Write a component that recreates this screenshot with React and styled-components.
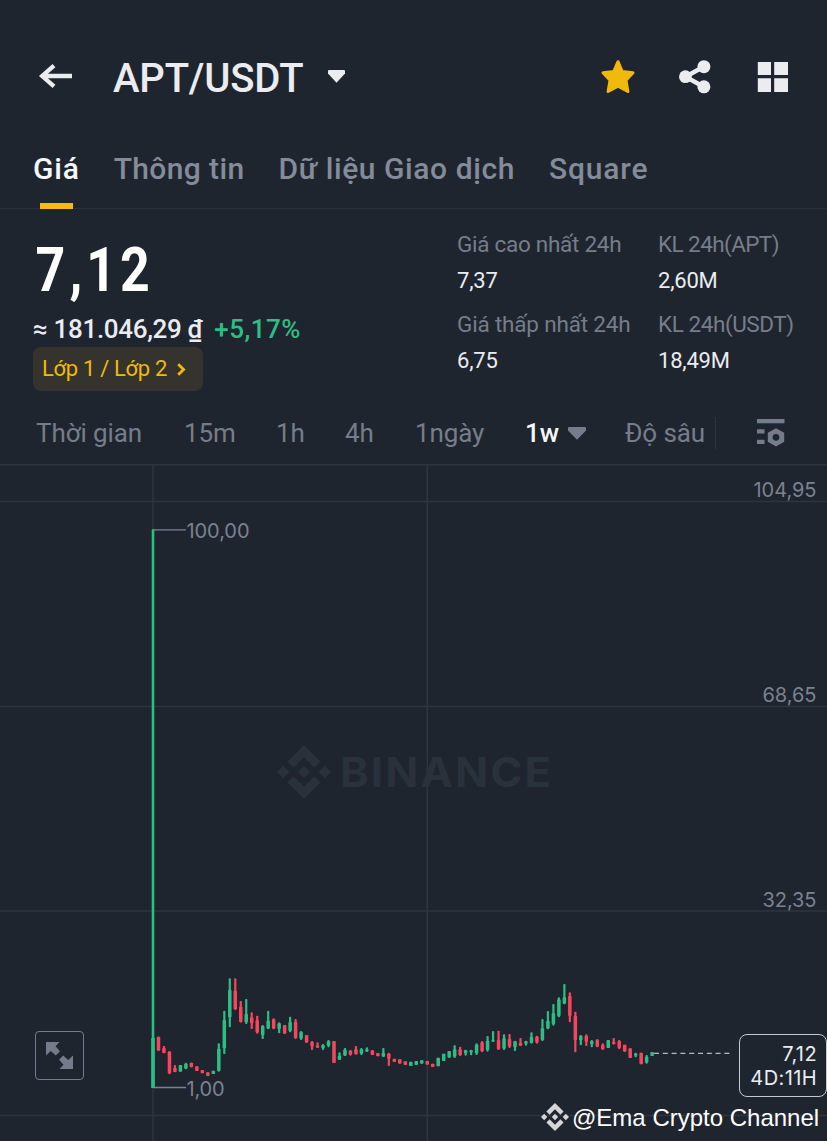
import React from "react";
import styled, { createGlobalStyle } from "styled-components";
import { SiBinance } from "react-icons/si";

const GlobalStyle = createGlobalStyle`
  * {
    box-sizing: border-box;
  }
  body {
    margin: 0;
    background: #1f252f;
    font-family: Roboto, "Noto Sans", sans-serif;
    color: #eaecef;
  }
`;

const Screen = styled.div`
  display: flex;
  flex-direction: column;
  width: 827px;
  height: 1141px;
  overflow: hidden;
  background: #1f252f;
  white-space: nowrap;
`;

const Header = styled.header`
  display: flex;
  align-items: center;
  height: 154px;
  padding: 0 38px;

  svg {
    display: block;
    flex: none;
  }
`;

const BackIcon = styled.svg`
  margin-bottom: 2px;
`;

const Title = styled.h1`
  flex: none;
  width: 215px;
  margin: 0 0 0 39px;
  padding-top: 4px;
  font-size: 40px;
  font-weight: 500;
  line-height: 48px;
  letter-spacing: -0.2px;
`;

const Actions = styled.div`
  display: flex;
  align-items: center;
  gap: 44px;
  margin-left: auto;
`;

const Tabs = styled.nav`
  display: flex;
  gap: 34px;
  height: 55px;
  padding-left: 33px;
  box-shadow: inset 0 -1px 0 #2a313b;
`;

const Tab = styled.div`
  display: flex;
  flex-direction: column;
  align-items: center;
  justify-content: space-between;
  font-size: 30px;
  font-weight: 500;
  line-height: 30px;
  letter-spacing: ${(p) => p.$spacing}px;
  color: ${(p) => (p.$active ? "#f5f6f8" : "#848b99")};

  &::after {
    content: "";
    width: 33px;
    height: 6px;
    background: ${(p) => (p.$active ? "#f8bb0c" : "transparent")};
  }
`;

const Summary = styled.section`
  display: flex;
  height: 194px;
  padding-left: 33px;
`;

const PriceColumn = styled.div`
  display: flex;
  flex-direction: column;
  align-items: flex-start;
  width: 424px;
  padding-top: 31px;
`;

const Price = styled.div`
  padding-left: 3px;
  font-size: 61px;
  font-weight: 700;
  line-height: 60px;
  letter-spacing: 4.8px;
  color: #fff;
  transform: scaleX(0.85);
  transform-origin: left;
`;

const FiatRow = styled.div`
  display: flex;
  gap: 12px;
  margin-top: 12px;
  font-size: 26px;
  font-weight: 500;
  line-height: 34px;
  letter-spacing: -0.34px;
`;

const Change = styled.span`
  letter-spacing: 0.45px;
  color: #2ebd85;
`;

const TagButton = styled.button`
  display: flex;
  align-items: center;
  gap: 10px;
  width: 170px;
  height: 44px;
  margin-top: 1px;
  padding: 1px 0 0 9px;
  border: 0;
  border-radius: 8px;
  background: #35332d;
  font: 400 22px/44px Roboto, sans-serif;
  letter-spacing: -0.32px;
  color: #f0b90b;
`;

const Stats = styled.div`
  display: grid;
  grid-template-columns: 201px 1fr;
  grid-auto-rows: 72px;
  row-gap: 8px;
  padding-top: 17px;
`;

const StatLabel = styled.div`
  font-size: 22.5px;
  line-height: 36px;
  letter-spacing: ${(p) => p.$spacing}px;
  color: #767d8a;
`;

const StatValue = styled.div`
  font-size: 22px;
  line-height: 37px;
  letter-spacing: -0.2px;
`;

const Intervals = styled.div`
  display: flex;
  align-items: center;
  height: 62px;
  padding-left: 36px;
`;

const Interval = styled.div`
  display: flex;
  align-items: center;
  gap: 9px;
  flex: none;
  width: ${(p) => p.$width}px;
  font-size: 26px;
  font-weight: ${(p) => (p.$active ? 500 : 400)};
  line-height: 34px;
  letter-spacing: -0.1px;
  color: ${(p) => (p.$active ? "#f5f6f8" : "#767d8a")};
`;

const Divider = styled.div`
  width: 1px;
  height: 32px;
  margin-right: 41px;
  background: #2d343f;
`;

const ChartArea = styled.section`
  position: relative;
  height: 677px;

  > svg {
    display: block;
  }
`;

const Watermark = styled.div`
  position: absolute;
  top: 281px;
  left: 277px;
  color: #29313b;
`;

const ExpandButton = styled.button`
  position: absolute;
  left: 35px;
  top: 567px;
  display: flex;
  align-items: center;
  justify-content: center;
  width: 49px;
  height: 49px;
  padding: 0;
  border: 1.5px solid #747b8a;
  border-radius: 4px;
  background: transparent;
`;

const PriceTag = styled.div`
  position: absolute;
  left: 739px;
  top: 570px;
  width: 88px;
  height: 63px;
  padding: 7px 9px 0 0;
  border: 1.5px solid #c5c8ce;
  border-radius: 8px;
  background: #1f252f;
  font: 400 20px/24px Inter, sans-serif;
  letter-spacing: 0.4px;
  text-align: right;
`;

const Credit = styled.div`
  position: absolute;
  left: 541px;
  top: 638px;
  display: flex;
  align-items: center;
  gap: 3px;
  font: 400 24px/30px "Liberation Sans", Arial, sans-serif;
  color: #fff;

  svg {
    flex: none;
    color: #d6d6d6;
  }

  span {
    padding-top: 1px;
  }
`;

const tabs = [
  { label: "Giá", spacing: 0.8, active: true },
  { label: "Thông tin", spacing: 0.38 },
  { label: "Dữ liệu Giao dịch", spacing: 0.58 },
  { label: "Square", spacing: 0.85 },
];

const stats = [
  { label: "Giá cao nhất 24h", value: "7,37", spacing: -0.28 },
  { label: "KL 24h(APT)", value: "2,60M", spacing: -0.58 },
  { label: "Giá thấp nhất 24h", value: "6,75", spacing: -0.18 },
  { label: "KL 24h(USDT)", value: "18,49M", spacing: -0.43 },
];

const intervals = [
  { label: "Thời gian", width: 148 },
  { label: "15m", width: 92 },
  { label: "1h", width: 69 },
  { label: "4h", width: 70 },
  { label: "1ngày", width: 110 },
  { label: "1w", width: 100, active: true },
  { label: "Độ sâu", width: 90 },
];

// direction, high, low and (where the wick shows) body top and bottom
const candles = [
  ["r", 230, 272], ["r", 258, 280, 264, 279], ["r", 273, 343, 275, 340], ["r", 315, 337, 324, 336],
  ["g", 315, 335], ["g", 308, 328, 311, 326], ["r", 308, 322], ["r", 319, 333], ["r", 330, 340],
  ["r", 337, 348], ["g", 332, 342], ["g", 250, 335, 266, 333], ["g", 152, 282, 180, 265],
  ["g", 55, 202, 90, 172], ["r", 55, 150, 92, 148], ["r", 123, 188, 140, 186], ["g", 117, 192, 162, 187],
  ["r", 157, 207, 172, 190], ["r", 167, 221, 181, 218], ["g", 195, 237, 198, 225], ["g", 152, 208, 182, 206],
  ["r", 175, 208, 178, 206], ["g", 187, 220, 190, 207], ["r", 195, 221], ["g", 170, 217, 186, 213],
  ["r", 177, 237, 186, 234], ["g", 213, 240, 216, 236], ["r", 225, 248], ["r", 243, 270, 246, 260],
  ["r", 247, 264, 257, 263], ["g", 252, 270, 255, 264], ["g", 240, 262, 244, 257], ["r", 243, 309],
  ["g", 277, 300, 287, 299], ["g", 264, 288, 269, 287], ["r", 270, 287, 272, 284], ["r", 258, 284, 268, 283],
  ["g", 264, 285, 268, 281], ["g", 262, 276, 268, 275], ["r", 271, 285], ["r", 279, 289],
  ["g", 264, 291, 279, 290], ["r", 278, 318, 281, 296], ["r", 296, 306], ["r", 298, 311], ["r", 304, 315],
  ["g", 305, 318], ["g", 303, 315], ["g", 301, 311], ["r", 303, 314], ["r", 311, 321], ["g", 293, 319],
  ["g", 281, 303], ["g", 273, 293], ["g", 256, 294, 268, 290], ["r", 260, 288, 268, 286],
  ["g", 269, 287, 271, 280], ["g", 269, 286, 271, 277], ["g", 250, 285, 254, 280], ["r", 243, 277, 247, 274],
  ["g", 228, 275, 242, 270], ["g", 213, 246, 240, 245], ["r", 212, 270, 240, 268], ["g", 223, 270, 235, 266],
  ["r", 222, 264, 237, 260], ["g", 242, 273, 244, 262], ["r", 234, 258, 248, 257], ["g", 242, 257, 244, 251],
  ["g", 217, 251, 231, 249], ["r", 227, 251, 230, 248], ["g", 177, 243, 205, 240], ["g", 153, 208, 182, 206],
  ["g", 132, 197, 160, 192], ["g", 112, 172, 118, 168], ["g", 72, 133, 112, 131], ["r", 97, 187, 108, 168],
  ["r", 155, 277, 168, 240], ["g", 225, 256, 228, 241], ["r", 223, 258, 228, 245], ["g", 240, 262, 243, 253],
  ["r", 237, 262, 240, 260], ["r", 250, 270, 255, 268], ["g", 240, 264], ["r", 234, 254, 245, 252],
  ["r", 240, 268, 243, 264], ["r", 254, 275], ["r", 265, 294], ["g", 278, 292, 281, 287],
  ["r", 278, 313], ["g", 285, 311, 290, 308], ["g", 276, 288],
];

const GREEN = "#2ebd85";
const RED = "#f6465d";
const STEP = 5.485;

const scaleY = (v) => 496 + v / 3;

const priceLevels = [
  { y: 37.5, label: "104,95", width: 63 },
  { y: 242.5, label: "68,65", width: 54 },
  { y: 447, label: "32,35", width: 54 },
  { y: 651.5 },
];

function Caret({ color, width = 17 }) {
  return (
    <svg width={width} height="13" viewBox="0 0 17 13" preserveAspectRatio="none">
      <path d="M1 0H16Q17 0 17 1V3.6L8.5 12.8L0 3.6V1Q0 0 1 0Z" fill={color} />
    </svg>
  );
}

function Candle({ index, data }) {
  const [dir, high, low, top = high, bottom = low] = data;
  const x = 153 + (index + 1) * STEP;
  return (
    <g fill={dir === "g" ? GREEN : RED}>
      <rect x={x - 1.1} y={scaleY(high)} width="2.2" height={(low - high) / 3} rx="0.8" />
      <rect x={x - 1.75} y={scaleY(top)} width="3.5" height={(bottom - top) / 3} rx="0.8" />
    </g>
  );
}

function Chart() {
  return (
    <svg width="827" height="677" viewBox="0 0 827 677" fontFamily="Inter, sans-serif" fontSize="20">
      <g stroke="#2e353f" strokeWidth="1.5">
        <path d="M0 0.7H827M153 0V677M427.3 0V677" />
        {priceLevels.map((level) => (
          <path key={level.y} d={`M0 ${level.y}H827`} />
        ))}
      </g>
      <g fill="#7b828f">
        {priceLevels.filter((l) => l.label).map((level) => (
          <text key={level.y} x={816.5 - level.width} y={Math.floor(level.y - 4)} textLength={level.width}>
            {level.label}
          </text>
        ))}
        <text x="186.5" y="74" textLength="63">100,00</text>
        <text x="186.5" y="632" textLength="38">1,00</text>
      </g>
      <path d="M153 65.8H186M153 623.5H186" stroke="#7b828f" strokeWidth="1.3" />
      <rect x="151.7" y="65.3" width="2.6" height="558" fill={GREEN} />
      <rect x="151.2" y="574" width="3.6" height="50" fill={GREEN} />
      {candles.map((data, i) => (
        <Candle key={i} index={i} data={data} />
      ))}
      <path d="M654 589.3H730" stroke="#b4b9c1" strokeWidth="1.3" strokeDasharray="5 3.8" />
    </svg>
  );
}

export default function App() {
  return (
    <Screen>
      <GlobalStyle />
      <Header>
        <BackIcon width="36" height="24" viewBox="0 0 36 24" fill="none" stroke="#eaecef" strokeWidth="4.3">
          <path d="M16 1.6 4.2 12 16 22.4M5 12H34" />
        </BackIcon>
        <Title>APT/USDT</Title>
        <Caret color="#eaecef" />
        <Actions>
          <svg width="34" height="34" viewBox="0 0 34 34" fill="#f0b90b" stroke="#f0b90b" strokeWidth="3" strokeLinejoin="round">
            <path d="M17 1.7 21.2 11.6 32 12.8 25 20.2 26.9 31.5 17 26.2 7.1 31.5 9 20.2 2 12.8 12.8 11.6Z" />
          </svg>
          <svg width="34" height="34" viewBox="0 0 34 34" fill="#eaecef">
            <path d="M24.7 6.7 6.4 16.7 24.7 26.8" fill="none" stroke="#eaecef" strokeWidth="4.4" />
            <circle cx="6.4" cy="16.7" r="6.4" />
            <circle cx="24.9" cy="6.7" r="6.5" />
            <circle cx="24.9" cy="26.8" r="6.5" />
          </svg>
          <svg width="32" height="32" viewBox="0 0 32 32" fill="#eaecef">
            <path d="M0.8 1H14V14H0.8ZM17.2 1H31V14H17.2ZM0.8 17.3H14V31H0.8ZM17.2 17.3H31V31H17.2Z" />
          </svg>
        </Actions>
      </Header>

      <Tabs>
        {tabs.map((tab) => (
          <Tab key={tab.label} $active={tab.active} $spacing={tab.spacing}>
            {tab.label}
          </Tab>
        ))}
      </Tabs>

      <Summary>
        <PriceColumn>
          <Price>7,12</Price>
          <FiatRow>
            <span>≈ 181.046,29 ₫</span>
            <Change>+5,17%</Change>
          </FiatRow>
          <TagButton>
            Lớp 1 / Lớp 2
            <svg width="9" height="13" viewBox="0 0 9 13" fill="none" stroke="#f0b90b" strokeWidth="2.8">
              <path d="M1.2 1.2 6.6 6.5 1.2 11.8" />
            </svg>
          </TagButton>
        </PriceColumn>
        <Stats>
          {stats.map((stat) => (
            <div key={stat.label}>
              <StatLabel $spacing={stat.spacing}>{stat.label}</StatLabel>
              <StatValue>{stat.value}</StatValue>
            </div>
          ))}
        </Stats>
      </Summary>

      <Intervals>
        {intervals.map((item) => (
          <Interval key={item.label} $width={item.width} $active={item.active}>
            {item.label}
            {item.active && <Caret color="#767d8a" width={18} />}
          </Interval>
        ))}
        <Divider />
        <svg width="28" height="28" viewBox="0 0 28 28" fill="#767d8a">
          <path d="M0 0H27.5V4.3H0ZM0 10.3H7.5V14.6H0ZM0 20.7H7.5V25H0Z" />
          <path
            fillRule="evenodd"
            d="M19 9.2 27.2 13.8V22.8L19 27.4 10.8 22.8V13.8ZM19 14.9A3.4 3.4 0 1 0 19 21.7A3.4 3.4 0 1 0 19 14.9Z"
          />
        </svg>
      </Intervals>

      <ChartArea>
        <Watermark>
          <svg width="276" height="54" viewBox="0 0 276 54" fill="currentColor">
            <SiBinance size={54} />
            <text
              x="63"
              y="42"
              textLength="213"
              lengthAdjust="spacingAndGlyphs"
              letterSpacing="2"
              fontFamily="Inter, sans-serif"
              fontSize="41"
              fontWeight="700"
            >
              BINANCE
            </text>
          </svg>
        </Watermark>
        <Chart />
        <ExpandButton>
          <svg width="27" height="27" viewBox="0 0 27 27" fill="#747b8a">
            <path d="M0 0H13.5L9.5 4.3 14 9.2 9.8 13.6 4.8 8.9 0 13.5Z" />
            <path d="M27 27H13.5L17.5 22.7 13 17.8 17.2 13.4 22.2 18.1 27 13.5Z" />
          </svg>
        </ExpandButton>
        <PriceTag>
          <div>7,12</div>
          <div>4D:11H</div>
        </PriceTag>
        <Credit>
          <SiBinance size={28} />
          <span>@Ema Crypto Channel</span>
        </Credit>
      </ChartArea>
    </Screen>
  );
}
